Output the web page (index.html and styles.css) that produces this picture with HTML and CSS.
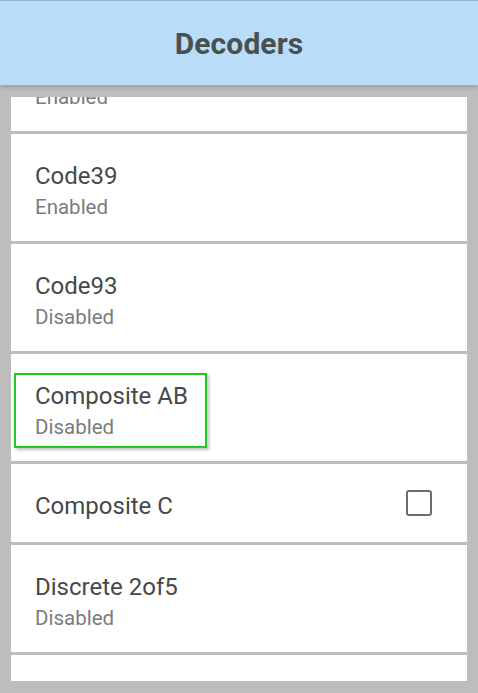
FILE: index.html
```html
<!DOCTYPE html>
<html>
<head>
<meta charset="utf-8">
<link rel="stylesheet" href="styles.css">
</head>
<body>
<div class="screen">
  <header class="appbar"><h1 class="title">Decoders</h1></header>
  <main class="viewport">
    <div class="list">
      <div class="item partial"><div class="sub">Enabled</div></div>
      <div class="item"><div class="label">Code39</div><div class="sub">Enabled</div></div>
      <div class="item"><div class="label">Code93</div><div class="sub">Disabled</div></div>
      <div class="item focused"><div class="label">Composite AB</div><div class="sub">Disabled</div><div class="focus-ring"></div></div>
      <div class="item single"><div class="label">Composite C</div><span class="checkbox"></span></div>
      <div class="item"><div class="label">Discrete 2of5</div><div class="sub">Disabled</div></div>
      <div class="item"></div>
    </div>
  </main>
</div>
</body>
</html>
```
FILE: styles.css
```css
* { box-sizing: border-box; }
html, body { margin: 0; padding: 0; }
body {
  width: 478px;
  height: 693px;
  overflow: hidden;
  background: #bdbebc;
  font-family: Roboto, "Noto Sans", sans-serif;
}
.screen {
  display: flex;
  flex-direction: column;
  height: 693px;
}
.appbar {
  position: relative;
  z-index: 2;
  height: 85px;
  flex: 0 0 85px;
  background: #b9ddf8;
  border-top: 1px solid #8fb3cf;
  box-shadow: 0 2px 5px rgba(0, 0, 0, 0.18);
  display: flex;
  align-items: center;
  justify-content: center;
}
.title {
  margin: 0;
  font-size: 30px;
  font-weight: 700;
  color: #4a4f4f;
  letter-spacing: 0.1px;
}
.viewport {
  margin: 12px 11px 0 11px;
  height: 584px;
  overflow: hidden;
}
.list {
  margin-top: -73px;
  display: flex;
  flex-direction: column;
  gap: 3px;
}
.item {
  position: relative;
  background: #ffffff;
  height: 107px;
  flex: 0 0 auto;
  padding: 28px 0 0 24px;
}
.item.partial {
  padding-top: 61px;
}
.label {
  font-size: 24px;
  line-height: 28px;
  color: #464949;
}
.sub {
  margin-top: 5px;
  font-size: 20.5px;
  line-height: 24px;
  color: #7a7c7c;
}
.item.partial .sub {
  margin-top: 0;
}
.item.single {
  height: 78px;
  padding: 6px 35px 0 24px;
  display: flex;
  align-items: center;
  justify-content: space-between;
}
.checkbox {
  width: 26px;
  height: 26px;
  margin-top: -6px;
  border: 2.5px solid #6c6c6c;
  border-radius: 3px;
}
.focus-ring {
  position: absolute;
  left: 3px;
  top: 19px;
  width: 193px;
  height: 75px;
  border: 2px solid #22c922;
  box-shadow: 2px 2px 3px rgba(0, 0, 0, 0.25);
}
```
